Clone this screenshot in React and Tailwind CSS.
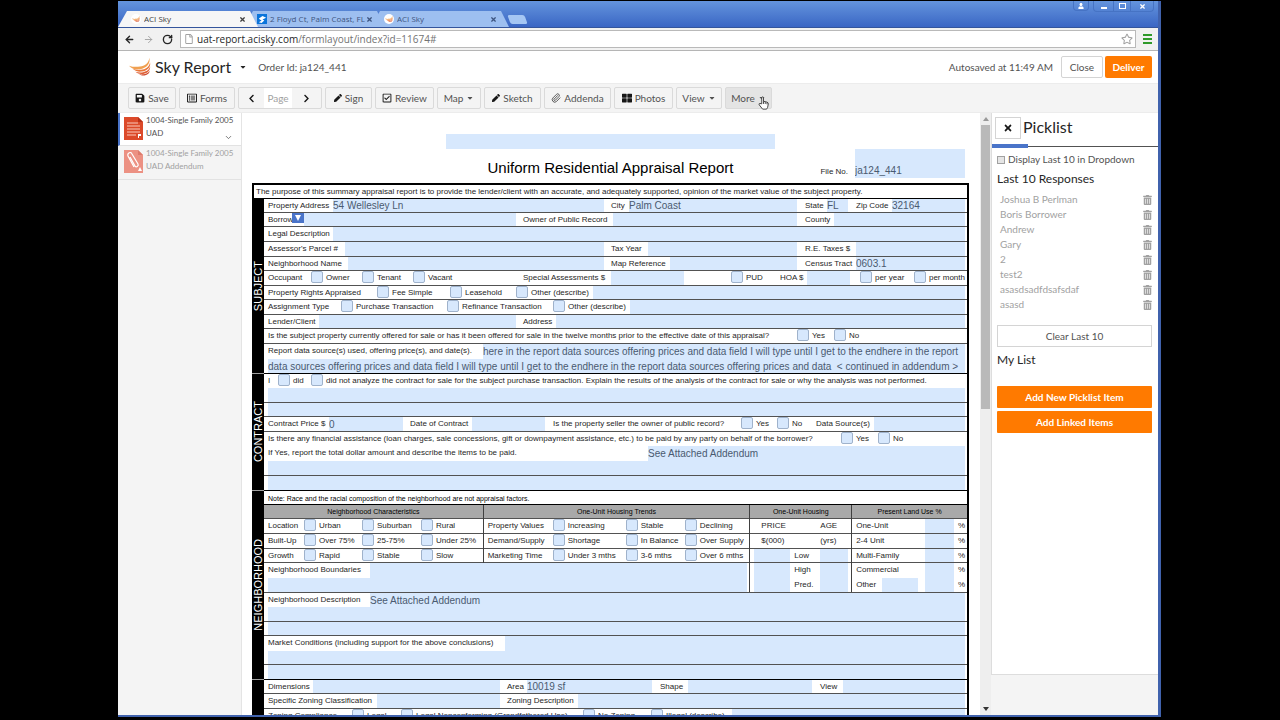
import React from "react";
import {
  FaSave,
  FaRegListAlt,
  FaChevronLeft,
  FaChevronRight,
  FaPen,
  FaRegCheckSquare,
  FaThLarge,
  FaCaretDown,
  FaTimes,
  FaRegStar,
  FaUser,
  FaRegFile,
  FaTrashAlt,
} from "react-icons/fa";
import {
  ArrowLeft,
  ArrowRight,
  RotateCw,
  ChevronDown,
  Paperclip,
} from "lucide-react";

const responses = [
  "Joshua B Perlman",
  "Boris Borrower",
  "Andrew",
  "Gary",
  "2",
  "test2",
  "asasdsadfdsafsdaf",
  "asasd",
];

/* ---------- Form building blocks ---------- */

const Row = ({ h = "h-[15px]", line = true, children }) => (
  <div
    className={`flex items-stretch pl-1 pr-[2px] ${h} ${
      line ? "border-b border-neutral-600" : ""
    }`}
  >
    {children}
  </div>
);

const Text = ({ w = "", children }) => (
  <span className={`shrink-0 whitespace-nowrap leading-[14px] ${w}`}>
    {children}
  </span>
);

const Field = ({ w = "flex-1", name, value = "" }) => (
  <input
    type="text"
    aria-label={name}
    defaultValue={value}
    className={`min-w-0 bg-[#d7e8fd] text-[10px] text-[#4a5a70] outline-none ${w}`}
  />
);

const Tick = ({ w = "", children }) => (
  <label
    className={`flex shrink-0 items-start gap-[3px] whitespace-nowrap leading-[14px] ${w}`}
  >
    <input
      type="checkbox"
      className="h-3 w-3 shrink-0 appearance-none rounded-[2px] border border-[#9fb2cb] bg-[#d7e8fd]"
    />
    {children}
  </label>
);

const Section = ({ title, children }) => (
  <section className="flex">
    <div className="flex w-3 shrink-0 items-center justify-center border-b border-neutral-400 bg-black">
      <h3 className="rotate-180 text-[11px] leading-3 text-white [writing-mode:vertical-rl]">
        {title}
      </h3>
    </div>
    <div className="min-w-0 flex-1 border-b border-black">{children}</div>
  </section>
);

const ColumnHead = ({ children }) => (
  <div className="h-[14px] border-b border-neutral-600 bg-[#a9a9a9] text-center text-[7px] leading-[13px] text-black">
    {children}
  </div>
);

const SubjectSection = () => (
  <Section title="SUBJECT">
    <Row h="h-[14px]">
      <Text w="w-[65px]">Property Address</Text>
      <Field w="w-[271px]" name="Property Address" value="54 Wellesley Ln" />
      <Text w="w-[25px] pl-[7px]">City</Text>
      <Field w="w-[168px]" name="City" value="Palm Coast" />
      <Text w="w-[30px] pl-2">State</Text>
      <Field w="w-[21px]" name="State" value="FL" />
      <Text w="w-[44px] pl-2">Zip Code</Text>
      <Field name="Zip Code" value="32164" />
    </Row>
    <Row h="h-[14px]">
      <div className="relative w-9 shrink-0 leading-[14px]">
        Borrow
        <button
          type="button"
          aria-label="Borrower choices"
          className="absolute top-0 right-0 flex h-[10px] w-3 items-center justify-center bg-[#4a74c9] text-white"
        >
          <svg viewBox="0 0 6 6" className="h-[6px] w-[6px]">
            <path d="M0 0h6L3 6z" fill="currentColor" />
          </svg>
        </button>
      </div>
      <Field w="w-[212px]" name="Borrower" />
      <Text w="w-[97px] pl-[7px]">Owner of Public Record</Text>
      <Field w="w-[184px]" name="Owner of Public Record" />
      <Text w="w-[37px] pl-2">County</Text>
      <Field name="County" />
    </Row>
    <Row>
      <Text w="w-[65px]">Legal Description</Text>
      <Field name="Legal Description" />
    </Row>
    <Row>
      <Text w="w-[77px]">Assessor's Parcel #</Text>
      <Field w="w-[259px]" name="Assessor's Parcel #" />
      <Text w="w-[44px] pl-[7px]">Tax Year</Text>
      <Field w="w-[149px]" name="Tax Year" />
      <Text w="w-[59px] pl-2">R.E. Taxes $</Text>
      <Field name="R.E. Taxes $" />
    </Row>
    <Row h="h-[14px]">
      <Text w="w-[80px]">Neighborhood Name</Text>
      <Field w="w-[256px]" name="Neighborhood Name" />
      <Text w="w-[66px] pl-[7px]">Map Reference</Text>
      <Field w="w-[127px]" name="Map Reference" />
      <Text w="w-[59px] pl-2">Census Tract</Text>
      <Field name="Census Tract" value="0603.1" />
    </Row>
    <Row>
      <Text w="w-[43px]">Occupant</Text>
      <Tick w="w-[51px]">Owner</Tick>
      <Tick w="w-[51px]">Tenant</Tick>
      <Tick w="w-[103px]">Vacant</Tick>
      <Text w="w-[95px] pl-[7px]">Special Assessments $</Text>
      <Field w="w-[73px]" name="Special Assessments $" />
      <Tick w="ml-[47px] w-[49px]">PUD</Tick>
      <Text w="w-[27px]">HOA $</Text>
      <Field w="w-[43px]" name="HOA $" />
      <Tick w="ml-[10px] w-[54px]">per year</Tick>
      <Tick>per month</Tick>
    </Row>
    <Row h="h-[14px]">
      <Text w="w-[109px]">Property Rights Appraised</Text>
      <Tick w="w-[73px]">Fee Simple</Tick>
      <Tick w="w-[66px]">Leasehold</Tick>
      <Tick w="w-[77px]">Other (describe)</Tick>
      <Field name="Other rights appraised" />
    </Row>
    <Row>
      <Text w="w-[73px]">Assignment Type</Text>
      <Tick w="w-[106px]">Purchase Transaction</Tick>
      <Tick w="w-[106px]">Refinance Transaction</Tick>
      <Tick w="w-[77px]">Other (describe)</Tick>
      <Field name="Other assignment type" />
    </Row>
    <Row h="h-[14px]">
      <Text w="w-[51px]">Lender/Client</Text>
      <Field w="w-[197px]" name="Lender/Client" />
      <Text w="w-[40px] pl-[7px]">Address</Text>
      <Field name="Address" />
    </Row>
    <Row>
      <Text w="w-[529px]">
        Is the subject property currently offered for sale or has it been offered
        for sale in the twelve months prior to the effective date of this
        appraisal?
      </Text>
      <Tick w="w-[37px]">Yes</Tick>
      <Tick>No</Tick>
    </Row>
    <Row line={false}>
      <Text w="w-[215px]">
        Report data source(s) used, offering price(s), and date(s).
      </Text>
      <Field
        name="Report data sources"
        value="here in the report data sources offering prices and data field I will type until I get to the endhere in the report"
      />
    </Row>
    <Row h="h-[14px]" line={false}>
      <Field
        name="Report data sources, continued"
        value="data sources offering prices and data field I will type until I get to the endhere in the report data sources offering prices and data  < continued in addendum >"
      />
    </Row>
  </Section>
);

const ContractSection = () => (
  <Section title="CONTRACT">
    <Row h="h-[14px]" line={false}>
      <Text w="w-[10px]">I</Text>
      <Tick w="w-[33px]">did</Tick>
      <Tick>
        did not analyze the contract for sale for the subject purchase
        transaction. Explain the results of the analysis of the contract for
        sale or why the analysis was not performed.
      </Tick>
    </Row>
    <Row>
      <Field name="Contract analysis" />
    </Row>
    <Row h="h-[14px]">
      <Field name="Contract analysis, continued" />
    </Row>
    <Row>
      <Text w="w-[61px]">Contract Price $</Text>
      <Field w="w-[74px]" name="Contract Price" value="0" />
      <Text w="w-[69px] pl-[7px]">Date of Contract</Text>
      <Field w="w-[73px]" name="Date of Contract" />
      <Text w="w-[196px] pl-2">
        Is the property seller the owner of public record?
      </Text>
      <Tick w="w-[36px]">Yes</Tick>
      <Tick w="w-[31px]">No</Tick>
      <Text w="w-[66px] pl-2">Data Source(s)</Text>
      <Field name="Data Source(s)" />
    </Row>
    <Row h="h-[14px]" line={false}>
      <Text w="w-[573px]">
        Is there any financial assistance (loan charges, sale concessions, gift
        or downpayment assistance, etc.) to be paid by any party on behalf of
        the borrower?
      </Text>
      <Tick w="w-[37px]">Yes</Tick>
      <Tick>No</Tick>
    </Row>
    <Row line={false}>
      <Text w="w-[380px]">
        If Yes, report the total dollar amount and describe the items to be
        paid.
      </Text>
      <Field name="Financial assistance" value="See Attached Addendum" />
    </Row>
    <Row>
      <Field name="Financial assistance, line 2" />
    </Row>
    <Row h="h-[14px]" line={false}>
      <Field name="Financial assistance, line 3" />
    </Row>
  </Section>
);

const characteristics = [
  ["h-[15px]", "Location", "Urban", "Suburban", "Rural"],
  ["h-[15px]", "Built-Up", "Over 75%", "25-75%", "Under 25%"],
  ["h-[14px]", "Growth", "Rapid", "Stable", "Slow"],
];

const trends = [
  ["h-[15px]", "Property Values", "Increasing", "Stable", "Declining"],
  ["h-[15px]", "Demand/Supply", "Shortage", "In Balance", "Over Supply"],
  ["h-[14px]", "Marketing Time", "Under 3 mths", "3-6 mths", "Over 6 mths"],
];

const prices = [
  ["h-[14px]", "Low", true],
  ["h-[15px]", "High", false],
  ["h-[14px]", "Pred.", false],
];

const landUse = [
  ["h-[15px]", "One-Unit", true],
  ["h-[15px]", "2-4 Unit", true],
  ["h-[14px]", "Multi-Family", true],
  ["h-[15px]", "Commercial", false],
];

const NeighborhoodSection = () => (
  <Section title="NEIGHBORHOOD">
    <p className="h-[14px] border-b border-black pl-1 text-[7px] leading-[15px] text-black">
      Note: Race and the racial composition of the neighborhood are not
      appraisal factors.
    </p>
    <div className="grid grid-cols-[minmax(0,486fr)_minmax(0,102fr)_minmax(0,116fr)] border-b border-neutral-600">
      <div className="min-w-0">
        <div className="grid grid-cols-[minmax(0,219fr)_minmax(0,267fr)]">
          <div>
            <ColumnHead>Neighborhood Characteristics</ColumnHead>
            {characteristics.map(([h, label, a, b, c]) => (
              <Row key={label} h={h}>
                <Text w="w-[36px]">{label}</Text>
                <Tick w="w-[58px]">{a}</Tick>
                <Tick w="w-[59px]">{b}</Tick>
                <Tick>{c}</Tick>
              </Row>
            ))}
          </div>
          <div className="border-l border-neutral-700">
            <ColumnHead>One-Unit Housing Trends</ColumnHead>
            {trends.map(([h, label, a, b, c]) => (
              <Row key={label} h={h}>
                <Text w="w-[65px]">{label}</Text>
                <Tick w="w-[73px]">{a}</Tick>
                <Tick w="w-[59px]">{b}</Tick>
                <Tick>{c}</Tick>
              </Row>
            ))}
          </div>
        </div>
        <Row line={false}>
          <Text w="w-[102px]">Neighborhood Boundaries</Text>
          <Field name="Neighborhood Boundaries" />
        </Row>
        <Row h="h-[14px]" line={false}>
          <Field name="Neighborhood Boundaries, continued" />
        </Row>
      </div>
      <div className="border-l border-neutral-700">
        <ColumnHead>One-Unit Housing</ColumnHead>
        <Row>
          <Text w="w-[66px] pl-[7px]">PRICE</Text>
          <Text>AGE</Text>
        </Row>
        <Row>
          <Text w="w-[66px] pl-[7px]">$(000)</Text>
          <Text>(yrs)</Text>
        </Row>
        {prices.map(([h, label, line]) => (
          <Row key={label} h={h} line={line}>
            <Field w="w-9" name={`${label} price`} />
            <Text w="w-[30px] pl-1">{label}</Text>
            <Field w="w-7" name={`${label} age`} />
          </Row>
        ))}
      </div>
      <div className="border-l border-neutral-700">
        <ColumnHead>Present Land Use %</ColumnHead>
        {landUse.map(([h, label, line]) => (
          <Row key={label} h={h} line={line}>
            <Text w="w-[69px]">{label}</Text>
            <Field name={`${label} percent`} />
            <Text w="pl-1">%</Text>
          </Row>
        ))}
        <Row h="h-[14px]" line={false}>
          <Text w="w-[26px]">Other</Text>
          <Field w="w-9" name="Other land use" />
          <div className="w-[7px] shrink-0" />
          <Field name="Other percent" />
          <Text w="pl-1">%</Text>
        </Row>
      </div>
    </div>
    <Row h="h-[14px]" line={false}>
      <Text w="w-[102px]">Neighborhood Description</Text>
      <Field name="Neighborhood Description" value="See Attached Addendum" />
    </Row>
    <Row>
      <Field name="Neighborhood Description, line 2" />
    </Row>
    <Row h="h-[14px]">
      <Field name="Neighborhood Description, line 3" />
    </Row>
    <Row line={false}>
      <Text w="w-[237px]">
        Market Conditions (including support for the above conclusions)
      </Text>
      <Field name="Market Conditions" />
    </Row>
    <Row h="h-[14px]">
      <Field name="Market Conditions, line 2" />
    </Row>
    <Row h="h-[14px]" line={false}>
      <Field name="Market Conditions, line 3" />
    </Row>
  </Section>
);

const SiteSection = () => (
  <Section title="">
    <Row h="h-[14px]">
      <Text w="w-[45px]">Dimensions</Text>
      <Field w="w-[187px]" name="Dimensions" />
      <Text w="w-[27px] pl-[7px]">Area</Text>
      <Field w="w-[125px]" name="Area" value="10019 sf" />
      <Text w="w-[36px] pl-2">Shape</Text>
      <Field w="w-[124px]" name="Shape" />
      <Text w="w-[31px] pl-2">View</Text>
      <Field name="View" />
    </Row>
    <Row>
      <Text w="w-[109px]">Specific Zoning Classification</Text>
      <Field w="w-[123px]" name="Specific Zoning Classification" />
      <Text w="w-[78px] pl-[7px]">Zoning Description</Text>
      <Field name="Zoning Description" />
    </Row>
    <Row>
      <Text w="w-[84px]">Zoning Compliance</Text>
      <Tick w="w-[49px]">Legal</Tick>
      <Tick w="w-[182px]">Legal Nonconforming (Grandfathered Use)</Tick>
      <Tick w="w-[68px]">No Zoning</Tick>
      <Tick w="w-[81px]">Illegal (describe)</Tick>
      <Field name="Illegal zoning" />
    </Row>
  </Section>
);

const ReportForm = () => (
  <main className="min-w-0 flex-1 overflow-hidden bg-white pt-[21px] pr-[11px] pl-[10px] font-['Liberation_Sans',sans-serif] text-[8px] text-neutral-800">
    <div className="grid h-[49px] grid-cols-[1fr_auto_1fr]">
      <div />
      <div className="flex flex-col items-center justify-between">
        <input
          type="text"
          aria-label="Report heading"
          className="h-[15px] w-[329px] bg-[#d7e8fd]"
        />
        <h1 className="pb-[5px] text-[15px] leading-5 whitespace-nowrap text-black">
          Uniform Residential Appraisal Report
        </h1>
      </div>
      <label className="flex items-end gap-[7px] justify-self-end pr-1 pb-[5px] leading-[13px]">
        File No.
        <input
          type="text"
          defaultValue="ja124_441"
          className="h-[29px] w-[110px] bg-[#d7e8fd] pt-[14px] text-[10px] text-[#4a5a70]"
        />
      </label>
    </div>
    <div className="border-2 border-b-0 border-black">
      <p className="h-[14px] border-b border-black pl-[2px] leading-[13px] whitespace-nowrap">
        The purpose of this summary appraisal report is to provide the
        lender/client with an accurate, and adequately supported, opinion of the
        market value of the subject property.
      </p>
      <div className="-ml-[2px]">
        <SubjectSection />
        <ContractSection />
        <NeighborhoodSection />
        <SiteSection />
      </div>
    </div>
  </main>
);

/* ---------- Browser frame ---------- */

const AciMark = ({ className }) => (
  <svg viewBox="0 0 24 20" className={className} fill="none">
    <path d="M22 0c0 6-5 9-10 9.500C8 10 4 10 0 8.500c3 3.500 8 4.500 12 4C19 11.500 24 6 22 0z" fill="#f0a050" />
    <path d="M23 5c-1 5-5 7.500-10 8-3 .3-6 .2-9-1 3 3 7 3.500 10 3 6-1 10-5 9-10z" fill="#e9773a" />
    <path d="M23 9.500c-1 4-5 6-9 6.500-2.500.3-5 0-7-.7 2.500 2.200 5.500 2.700 8.500 2.200 5-.8 8-4 7.500-8z" fill="#df6035" />
    <path d="M22.500 14c-1.500 2.500-4 3.700-7 4-2 .2-3 .1-4.500-.3 2 1.500 4 1.900 6 1.500 3.500-.6 5.500-2.700 5.500-5.200z" fill="#d04a2c" />
  </svg>
);

const BrowserTab = ({ w, active, icon, children }) => (
  <div
    className={`-mr-[14px] flex h-4 items-center gap-[3px] pr-3 pl-[13px] text-[8px] [clip-path:polygon(9px_0,calc(100%-8px)_0,100%_100%,0_100%)] ${w} ${
      active ? "z-10 bg-[#f6f6f6] text-neutral-700" : "bg-[#9dbff0] text-[#3d5580]"
    }`}
  >
    {icon}
    <a href="#" className="-mr-[3px] flex-1 overflow-hidden whitespace-nowrap">
      {children}
    </a>
    <button type="button" aria-label="Close tab">
      <FaTimes className="h-[7px] w-[7px]" />
    </button>
  </div>
);

const tabMark = (
  <span className="flex h-[10px] w-[10px] shrink-0 items-center justify-center rounded-full bg-white">
    <AciMark className="h-2 w-2" />
  </span>
);

const TitleBar = () => (
  <div className="flex h-[26px] items-end bg-linear-to-b from-[#6494dd] to-[#3b66c4] font-['Open_Sans',sans-serif]">
    <BrowserTab w="w-[140px]" active icon={tabMark}>
      ACI Sky
    </BrowserTab>
    <BrowserTab
      w="w-[141px]"
      icon={
        <span className="flex h-[10px] w-[10px] shrink-0 items-center justify-center bg-[#0a74da]">
          <svg viewBox="0 0 10 10" className="h-[9px] w-[9px]" fill="#fff">
            <path d="M1 4l4-3 4 2-4 2 2 1-3 3-3-1 3-2-2-1z" />
          </svg>
        </span>
      }
    >
      2 Floyd Ct, Palm Coast, FL
    </BrowserTab>
    <BrowserTab w="w-[138px]" icon={tabMark}>
      ACI Sky
    </BrowserTab>
    <button
      type="button"
      aria-label="New tab"
      className="mb-[3px] ml-[14px] h-[9px] w-[17px] skew-x-[20deg] rounded-[2px] bg-[#a5c6f3]"
    />
    <div className="ml-auto flex h-full items-start gap-1 pr-1 text-white">
      <button
        type="button"
        aria-label="Profile"
        className="flex h-[10px] w-4 items-center justify-center rounded-b border border-t-0 border-[#4673c4]"
      >
        <FaUser className="h-[6px] w-[6px]" />
      </button>
      <div className="flex rounded-b border border-t-0 border-[#4673c4]">
        <button type="button" aria-label="Minimize" className="flex h-[10px] w-[19px] items-end justify-center pb-[2px]">
          <span className="h-[2px] w-[6px] bg-white" />
        </button>
        <button type="button" aria-label="Restore" className="flex h-[10px] w-[18px] items-center justify-center border-x border-[#4673c4]">
          <span className="h-[6px] w-[7px] border border-white" />
        </button>
        <button type="button" aria-label="Close window" className="flex h-[10px] w-[22px] items-center justify-center">
          <FaTimes className="h-[7px] w-[7px]" />
        </button>
      </div>
    </div>
  </div>
);

const AddressBar = () => (
  <div className="flex h-6 items-center border-t border-t-[#34559c] border-b border-b-[#b5b5b5] bg-[#f1f1f1] pr-[6px] pl-[6px] text-neutral-800">
    <button type="button" aria-label="Back">
      <ArrowLeft className="h-[11px] w-[11px]" strokeWidth={3} />
    </button>
    <button type="button" aria-label="Forward" className="ml-2 text-neutral-400">
      <ArrowRight className="h-[11px] w-[11px]" strokeWidth={2} />
    </button>
    <button type="button" aria-label="Reload" className="ml-2">
      <RotateCw className="h-[11px] w-[11px]" strokeWidth={3} />
    </button>
    <div className="ml-[7px] flex h-[18px] flex-1 items-center border border-[#b9b9b9] bg-white pr-[2px] pl-1">
      <FaRegFile className="h-[10px] w-[8px] text-neutral-400" />
      <div className="ml-1 font-['Open_Sans',sans-serif] text-[10px] text-neutral-500">
        <span className="text-neutral-800">uat-report.acisky.com</span>
        /formlayout/index?id=11674#
      </div>
      <button type="button" aria-label="Bookmark" className="ml-auto text-neutral-400">
        <FaRegStar className="h-3 w-3" />
      </button>
    </div>
    <button
      type="button"
      aria-label="Browser menu"
      className="ml-[7px] flex flex-col gap-[2px]"
    >
      <span className="h-[2px] w-[9px] bg-[#2f9a2a]" />
      <span className="h-[2px] w-[9px] bg-[#2f9a2a]" />
      <span className="h-[2px] w-[9px] bg-[#2f9a2a]" />
    </button>
  </div>
);

/* ---------- Application ---------- */

const AppHeader = () => (
  <header className="flex h-8 items-center bg-white pr-[6px] pl-[11px]">
    <AciMark className="h-5 w-[22px]" />
    <button type="button" className="ml-1 flex items-center gap-2 text-[16px] text-neutral-800">
      Sky Report
      <FaCaretDown className="h-2 w-2" />
    </button>
    <span className="ml-[11px]">Order Id: ja124_441</span>
    <span className="mr-2 ml-auto">Autosaved at 11:49 AM</span>
    <button type="button" className="h-[22px] w-[42px] rounded-[2px] border border-neutral-300">
      Close
    </button>
    <button type="button" className="ml-[2px] h-[22px] w-[47px] rounded-[2px] bg-[#ff7a00] font-bold text-white">
      Deliver
    </button>
  </header>
);

const ToolButton = ({ w, className = "", children }) => (
  <button
    type="button"
    className={`flex h-[22px] items-center justify-center gap-[3px] rounded-[2px] border border-[#dadada] whitespace-nowrap ${w} ${className}`}
  >
    {children}
  </button>
);

const icon = "h-[10px] w-[10px] text-neutral-900";

const Toolbar = () => (
  <nav className="flex h-[30px] items-center gap-[3px] border-y border-[#ececec] bg-[#f4f4f4] pl-[10px]">
    <ToolButton w="w-12">
      <FaSave className={icon} /> Save
    </ToolButton>
    <ToolButton w="w-14">
      <FaRegListAlt className={icon} /> Forms
    </ToolButton>
    <div className="flex h-[22px] items-center rounded-[2px] border border-[#dadada]">
      <button type="button" aria-label="Previous page" className="flex w-[25px] justify-center">
        <FaChevronLeft className="h-[9px] w-[9px] text-neutral-900" />
      </button>
      <input
        type="text"
        aria-label="Page"
        placeholder="Page"
        className="h-full w-7 bg-white text-center placeholder:text-neutral-400"
      />
      <button type="button" aria-label="Next page" className="flex w-[29px] justify-center">
        <FaChevronRight className="h-[9px] w-[9px] text-neutral-900" />
      </button>
    </div>
    <ToolButton w="w-[47px]">
      <FaPen className="h-2 w-2 text-neutral-900" /> Sign
    </ToolButton>
    <ToolButton w="w-[59px]">
      <FaRegCheckSquare className={icon} /> Review
    </ToolButton>
    <ToolButton w="w-[44px]">
      Map <FaCaretDown className="h-2 w-2" />
    </ToolButton>
    <ToolButton w="w-[57px]">
      <FaPen className="h-2 w-2 text-neutral-900" /> Sketch
    </ToolButton>
    <ToolButton w="w-[67px]">
      <Paperclip className="h-[10px] w-[10px] text-neutral-700" /> Addenda
    </ToolButton>
    <ToolButton w="w-[59px]">
      <FaThLarge className={icon} /> Photos
    </ToolButton>
    <ToolButton w="w-[46px]">
      View <FaCaretDown className="h-2 w-2" />
    </ToolButton>
    <ToolButton w="w-[47px]" className="relative border-[#b5b5b5] bg-[#e4e4e4]">
      More <FaCaretDown className="h-2 w-2" />
      <svg viewBox="0 0 12 16" className="absolute top-2 left-8 h-[14px] w-[11px]">
        <path
          d="M4 9V2a1 1 0 0 1 2 0v4l4 1q1.500.5 1.500 2l-.8 4L9.500 15H5L1 10q-.5-1.500 1-1.500z"
          fill="#fff"
          stroke="#333"
        />
        <path d="M6 6v3M8 7v2M10 7.500v2" stroke="#333" fill="none" />
      </svg>
    </ToolButton>
  </nav>
);

const Sidebar = () => (
  <aside className="w-[124px] shrink-0 border-r border-[#e4e4e4] bg-[#f4f4f4] text-[8px] leading-[13px]">
    <a
      href="#"
      className="flex h-[33px] gap-[3px] border-b border-l-2 border-b-[#e2e2e2] border-l-[#4a74c9] bg-white pt-px pl-[4px]"
    >
      <svg viewBox="0 0 19 23" className="mt-[3px] h-[23px] w-[19px] shrink-0">
        <path d="M0 0h14l5 5v18H0z" fill="#dc4a2a" />
        <path d="M14 0l5 5h-5z" fill="#b5321a" />
        <path d="M3 6h11M3 9h13M3 12h13M3 15h13M3 18h9" stroke="#f9c9bb" />
        <path d="M14 17h3v2h-2v2h-1z" fill="#fff" />
      </svg>
      <span className="flex-1">
        1004-Single Family 2005
        <span className="flex justify-between pr-[8px]">
          UAD
          <ChevronDown className="mt-[6px] h-[9px] w-[9px]" />
        </span>
      </span>
    </a>
    <a
      href="#"
      className="flex h-[34px] gap-[3px] border-b border-[#e2e2e2] pt-px pl-[6px] text-neutral-400"
    >
      <svg viewBox="0 0 19 23" className="mt-[3px] h-[23px] w-[19px] shrink-0" fill="none">
        <path d="M0 0h14l5 5v18H0z" fill="#ec9183" />
        <path d="M14 0l5 5h-5z" fill="#dd7a6b" />
        <path
          d="M6 7l5 9c1 2 4 0 3-2L8 4C7 1 3 3 4 6l6 11"
          stroke="#fff"
          strokeWidth="1.2"
        />
        <path d="M14 21l2-4 2 4z" fill="#fff" />
      </svg>
      <span className="flex-1">
        1004-Single Family 2005
        <span className="block">UAD Addendum</span>
      </span>
    </a>
  </aside>
);

const ScrollBar = () => (
  <div className="flex w-[11px] shrink-0 flex-col items-center bg-[#eeeeee] py-1">
    <svg viewBox="0 0 6 4" className="h-1 w-[6px]">
      <path d="M0 4l3-4 3 4z" fill="#999" />
    </svg>
    <div className="mt-1 h-[284px] w-[9px] bg-[#b9b9b9]" />
    <svg viewBox="0 0 6 4" className="mt-auto h-1 w-[6px]">
      <path d="M0 0l3 4 3-4z" fill="#333" />
    </svg>
  </div>
);

const Picklist = () => (
  <aside className="w-[167px] shrink-0 bg-[#f4f4f4]">
    <div className="border-b border-l border-[#dddddd] bg-white pb-[241px]">
      <div className="flex h-[31px] items-start gap-[2px] pt-[4px] pl-[3px]">
        <button
          type="button"
          aria-label="Close picklist"
          className="flex h-[22px] w-[26px] items-center justify-center border border-neutral-300"
        >
          <FaTimes className="h-[10px] w-[10px] text-neutral-900" />
        </button>
        <h2 className="text-[16px] leading-5 text-neutral-800">Picklist</h2>
      </div>
      <div className="flex h-1 items-center">
        <span className="h-1 w-9 bg-[#4a74c9]" />
        <span className="h-px flex-1 bg-neutral-600" />
      </div>
      <div className="pr-[6px] pl-[5px]">
        <label className="flex h-[23px] items-center gap-[3px]">
          <input
            type="checkbox"
            className="h-2 w-2 appearance-none border border-neutral-400 bg-neutral-200"
          />
          Display Last 10 in Dropdown
        </label>
        <h3 className="text-[12px] leading-4 text-neutral-800">Last 10 Responses</h3>
        <ul className="mt-[5px] pl-[3px] text-neutral-400">
          {responses.map((name) => (
            <li key={name} className="flex h-[15px] items-center justify-between">
              {name}
              <button type="button" aria-label={`Delete ${name}`}>
                <FaTrashAlt className="h-[10px] w-[9px]" />
              </button>
            </li>
          ))}
        </ul>
        <button type="button" className="mt-[13px] h-[22px] w-full border border-neutral-300">
          Clear Last 10
        </button>
        <h3 className="mt-[5px] text-[12px] leading-4 text-neutral-800">My List</h3>
        <button type="button" className="mt-[18px] h-[22px] w-full rounded-[1px] bg-[#ff7a00] font-bold text-white">
          Add New Picklist Item
        </button>
        <button type="button" className="mt-[3px] h-[22px] w-full rounded-[1px] bg-[#ff7a00] font-bold text-white">
          Add Linked Items
        </button>
      </div>
    </div>
  </aside>
);

const App = () => (
  <div className="flex h-screen flex-col bg-black pt-px pr-[119px] pb-[3px] pl-[118px] font-['Lato',sans-serif] text-[10px] text-neutral-600">
    <div className="flex min-h-0 flex-1 flex-col border-r-3 border-b-2 border-[#4062ad] bg-white">
      <TitleBar />
      <AddressBar />
      <AppHeader />
      <Toolbar />
      <div className="flex min-h-0 flex-1">
        <Sidebar />
        <ReportForm />
        <ScrollBar />
        <Picklist />
      </div>
    </div>
  </div>
);

export default App;
